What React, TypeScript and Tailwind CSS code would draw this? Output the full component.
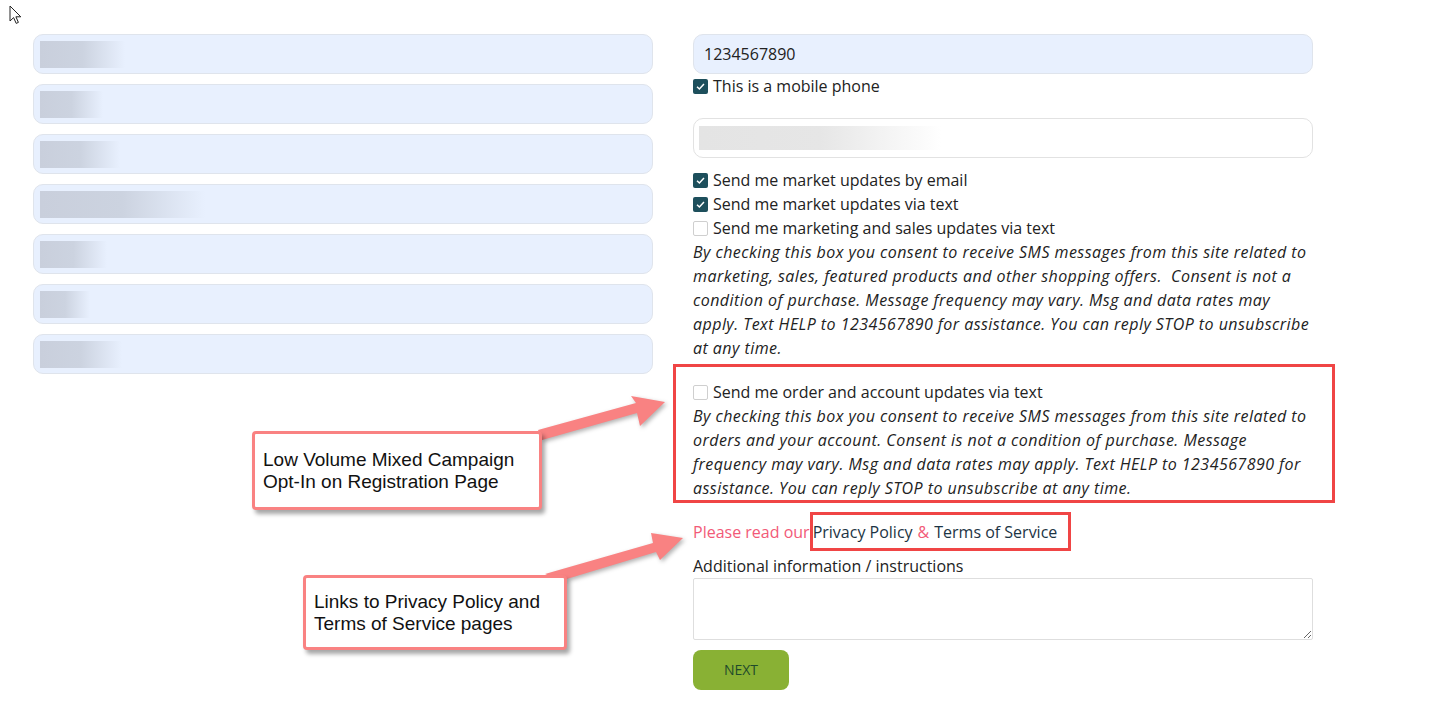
import { ReactNode } from 'react';

const blurWidths = [85, 63, 80, 165, 67, 50, 82];

function Box({ checked }: { checked?: boolean }) {
  if (checked) {
    return (
      <span className="flex h-[15px] w-[15px] shrink-0 items-center justify-center rounded-[2px] bg-[#1d4f5c]">
        <svg viewBox="0 0 12 12" className="h-[11px] w-[11px]">
          <path d="M2.2 6.3 4.8 8.8 9.8 3.4" fill="none" stroke="#fff" strokeWidth="1.6" />
        </svg>
      </span>
    );
  }
  return <span className="h-[15px] w-[15px] shrink-0 rounded-[2px] border border-[#cfcfcf] bg-white" />;
}

function CheckRow({ checked, children }: { checked?: boolean; children: ReactNode }) {
  return (
    <label className="flex h-6 items-center gap-[5px]">
      <Box checked={checked} />
      <span>{children}</span>
    </label>
  );
}

function Callout({ className, children }: { className: string; children: ReactNode }) {
  return (
    <div
      className={`absolute rounded-[4px] border-[3px] border-[#f98282] bg-white px-[8px] text-[19px] leading-[22px] text-[#111] shadow-[3px_4px_4px_rgba(0,0,0,0.35)] ${className}`}
      style={{ fontFamily: 'Arial, "Liberation Sans", sans-serif' }}
    >
      {children}
    </div>
  );
}

export default function App() {
  return (
    <div
      className="relative min-h-[708px] w-full bg-white text-[16px] leading-6 text-[#222]"
      style={{ fontFamily: '"Open Sans", "Noto Sans", sans-serif' }}
    >
      {/* cursor */}
      <svg viewBox="0 0 13 20" className="absolute left-[9px] top-[5px] h-[20px] w-[13px]">
        <path d="M1 1 L1 16 L4.6 12.6 L7.2 18.4 L9.4 17.4 L6.9 11.8 L11.8 11.8 Z" fill="#fff" stroke="#222" strokeWidth="1" strokeLinejoin="round" />
      </svg>

      <div className="flex gap-10 pl-[33px] pt-[34px]">
        {/* left column */}
        <div className="flex w-[620px] flex-col gap-[10px]">
          {blurWidths.map((w, i) => (
            <div
              key={i}
              className="flex h-10 items-center rounded-[10px] border border-[#dfe4ec] bg-[#e8f0fe] px-[6px]"
            >
              <div
                className="h-[27px] bg-linear-to-r from-[#c9cfdc] via-[#ccd3e0] to-[#e8f0fe]"
                style={{ width: w }}
              />
            </div>
          ))}
        </div>

        {/* right column */}
        <div className="flex w-[620px] flex-col">
          <div className="flex h-10 items-center rounded-[10px] border border-[#dfe4ec] bg-[#e8f0fe] px-[10px]">
            1234567890
          </div>
          <CheckRow checked>This is a mobile phone</CheckRow>

          <div className="mt-5 flex h-10 items-center rounded-[10px] border border-[#e2e2e2] bg-white px-[5px]">
            <div className="h-[24px] w-[242px] bg-linear-to-r from-[#e4e4e4] via-[#e6e6e6] to-white" />
          </div>

          <div className="mt-[10px]">
            <CheckRow checked>Send me market updates by email</CheckRow>
            <CheckRow checked>Send me market updates via text</CheckRow>
            <CheckRow>Send me marketing and sales updates via text</CheckRow>
            <p className="italic tracking-[0.45px]">
              By checking this box you consent to receive SMS messages from this site related to marketing, sales,
              featured products and other shopping offers.{'\u00a0'} Consent is not a condition of purchase. Message
              frequency may vary. Msg and data rates may apply. Text HELP to 1234567890 for assistance. You can reply
              STOP to unsubscribe at any time.
            </p>
          </div>

          <div className="relative mt-5">
            <div className="pointer-events-none absolute -bottom-[3px] -left-[20px] -right-[22px] -top-[16px] border-[3px] border-[#f04545]" />
            <CheckRow>Send me order and account updates via text</CheckRow>
            <p className="italic tracking-[0.45px]">
              By checking this box you consent to receive SMS messages from this site related to orders and your
              account. Consent is not a condition of purchase. Message frequency may vary. Msg and data rates may
              apply. Text HELP to 1234567890 for assistance. You can reply STOP to unsubscribe at any time.
            </p>
          </div>

          <div className="mt-5 flex h-6 items-center">
            <span className="text-[#f25a78]">Please read our</span>
            <span className="relative ml-[3px] flex items-center">
              <span className="pointer-events-none absolute -bottom-[7px] -left-[3px] -right-[14px] -top-[8px] border-[3px] border-[#f04545]" />
              <a className="text-[#1c3444]">Privacy Policy</a>
              <span className="mx-[5px] text-[#f25a78]">&amp;</span>
              <a className="text-[#1c3444]">Terms of Service</a>
            </span>
          </div>

          <div className="mt-[10px] h-6">Additional information / instructions</div>
          <textarea className="h-[62px] w-full rounded-[2px] border border-[#dedede] bg-white outline-none" />

          <button className="mt-[10px] h-10 w-24 rounded-[8px] bg-[#89b134] text-[14px] text-[#1f4a2b]">
            NEXT
          </button>
        </div>
      </div>

      {/* annotation arrows */}
      <svg
        className="pointer-events-none absolute left-0 top-0 h-[708px] w-[1430px] drop-shadow-[2px_2px_2px_rgba(0,0,0,0.3)]"
        viewBox="0 0 1430 708"
      >
        <polygon points="538,430 636,403 631,396 665,402 640,426 637,413 542,440" fill="#f98282" />
        <polygon points="545,574 653,543 651,533 683,538 660,560 656,552 560,581" fill="#f98282" />
      </svg>

      <Callout className="left-[252px] top-[431px] h-[79px] w-[290px] pt-[15px]">
        Low Volume Mixed Campaign
        <br />
        Opt-In on Registration Page
      </Callout>
      <Callout className="left-[303px] top-[575px] h-[75px] w-[264px] pt-[13px]">
        Links to Privacy Policy and
        <br />
        Terms of Service pages
      </Callout>
    </div>
  );
}
